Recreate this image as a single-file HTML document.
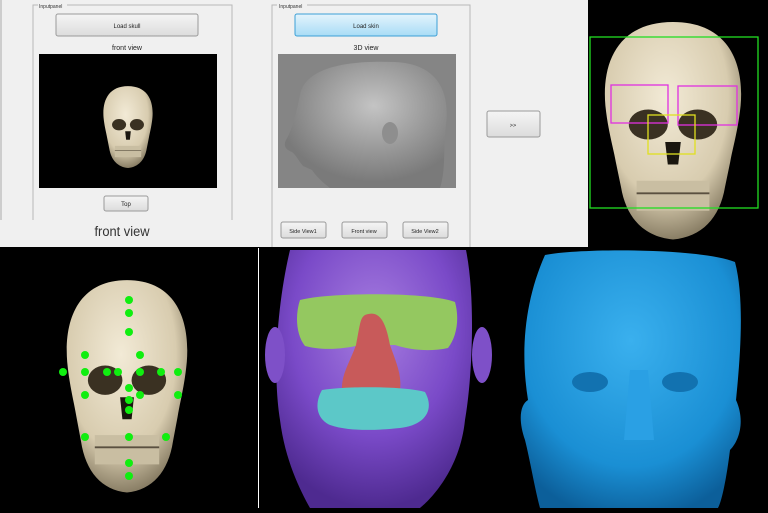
<!DOCTYPE html>
<html><head><style>
body{margin:0;width:768px;height:508px;overflow:hidden;background:#000;font-family:"Liberation Sans",sans-serif}
</style></head><body>
<svg width="768" height="508" xmlns="http://www.w3.org/2000/svg" font-family="Liberation Sans, sans-serif">
<defs>
<radialGradient id="bone" cx="45%" cy="35%" r="65%"><stop offset="0" stop-color="#f2ead6"/><stop offset="0.7" stop-color="#d8ccaf"/><stop offset="1" stop-color="#8a7f66"/></radialGradient>
<radialGradient id="purp" cx="50%" cy="30%" r="70%"><stop offset="0" stop-color="#a77ee0"/><stop offset="0.6" stop-color="#7a4ac8"/><stop offset="1" stop-color="#4e2a90"/></radialGradient>
<radialGradient id="blue" cx="50%" cy="35%" r="70%"><stop offset="0" stop-color="#3ab0ee"/><stop offset="0.7" stop-color="#1a8fd4"/><stop offset="1" stop-color="#0c5f9a"/></radialGradient>
<radialGradient id="gray" cx="55%" cy="35%" r="60%"><stop offset="0" stop-color="#c4c4c4"/><stop offset="1" stop-color="#7a7a7a"/></radialGradient>
<linearGradient id="btn" x1="0" y1="0" x2="0" y2="1"><stop offset="0" stop-color="#f5f5f5"/><stop offset="1" stop-color="#dcdcdc"/></linearGradient>
<linearGradient id="btnb" x1="0" y1="0" x2="0" y2="1"><stop offset="0" stop-color="#e4f4fc"/><stop offset="1" stop-color="#a8dcf6"/></linearGradient>
<g id="skull">
<path d="M0,-72 C42,-72 55,-40 52,-5 C50,15 46,28 44,40 L40,60 C36,85 22,100 0,102 C-22,100 -36,85 -40,60 L-44,40 C-46,28 -50,15 -52,-5 C-55,-40 -42,-72 0,-72Z" fill="url(#bone)"/>
<ellipse cx="-19" cy="10" rx="15" ry="12" fill="#3a3122"/><ellipse cx="19" cy="10" rx="15" ry="12" fill="#3a3122"/>
<path d="M-6,24 L6,24 L4,42 L-4,42Z" fill="#1a160f"/>
<rect x="-28" y="55" width="56" height="24" fill="#c9bea2"/>
<path d="M-28,65 H28" stroke="#5a5040" stroke-width="1.5"/>
</g>
</defs>
<!-- GUI -->
<rect x="0" y="0" width="588" height="247" fill="#f0f0f0"/>
<line x1="1" y1="0" x2="1" y2="220" stroke="#aaa"/>
<path d="M33,220 V5 H38 M67,5 H232 V220" fill="none" stroke="#b8b8b8"/>
<text x="39" y="8" font-size="5" fill="#333">Inputpanel</text>
<rect x="56" y="14" width="142" height="22" rx="2" fill="url(#btn)" stroke="#9a9a9a"/>
<text x="127" y="28" font-size="6" text-anchor="middle" fill="#222">Load skull</text>
<text x="127" y="50" font-size="7" text-anchor="middle" fill="#222">front view</text>
<rect x="39" y="54" width="178" height="134" fill="#000"/>
<g transform="translate(128,120) scale(0.47)"><use href="#skull"/></g>
<rect x="104" y="196" width="44" height="15" rx="2" fill="url(#btn)" stroke="#9a9a9a"/>
<text x="126" y="206" font-size="6" text-anchor="middle" fill="#222">Top</text>
<text x="122" y="236" font-size="14" text-anchor="middle" fill="#333" transform="translate(122,0) scale(0.92,1) translate(-122,0)">front view</text>
<path d="M272,247 V5 H277 M307,5 H470 V247" fill="none" stroke="#b8b8b8"/>
<text x="279" y="8" font-size="5" fill="#333">Inputpanel</text>
<rect x="295" y="14" width="142" height="22" rx="2" fill="url(#btnb)" stroke="#3c9fd6"/>
<text x="366" y="28" font-size="6" text-anchor="middle" fill="#222">Load skin</text>
<text x="366" y="50" font-size="7" text-anchor="middle" fill="#222">3D view</text>
<rect x="278" y="54" width="178" height="134" fill="#858585"/>
<path d="M300,95 C305,68 345,60 395,62 C438,64 450,92 446,125 C443,150 446,170 440,188 L330,188 C322,182 316,176 312,170 L303,166 C298,160 296,155 292,152 C286,150 283,146 286,140 C292,130 296,115 300,95Z" fill="url(#gray)"/>
<ellipse cx="390" cy="133" rx="8" ry="11" fill="#8e8e8e"/>
<rect x="281" y="222" width="45" height="16" rx="2" fill="url(#btn)" stroke="#9a9a9a"/>
<text x="303" y="233" font-size="5.5" text-anchor="middle" fill="#222">Side View1</text>
<rect x="342" y="222" width="45" height="16" rx="2" fill="url(#btn)" stroke="#9a9a9a"/>
<text x="364" y="233" font-size="5.5" text-anchor="middle" fill="#222">Front view</text>
<rect x="403" y="222" width="45" height="16" rx="2" fill="url(#btn)" stroke="#9a9a9a"/>
<text x="425" y="233" font-size="5.5" text-anchor="middle" fill="#222">Side View2</text>
<rect x="487" y="111" width="53" height="26" rx="2" fill="url(#btn)" stroke="#9a9a9a"/>
<text x="513" y="127" font-size="5.5" text-anchor="middle" fill="#222">&gt;&gt;</text>
<!-- top right skull -->
<g transform="translate(673,112) scale(1.3,1.25)"><use href="#skull"/></g>
<rect x="590" y="37" width="168" height="171" fill="none" stroke="#22dd22" stroke-width="1.3"/>
<rect x="611" y="85" width="57" height="38" fill="none" stroke="#e030e0" stroke-width="1.3"/>
<rect x="678" y="86" width="59" height="39" fill="none" stroke="#e030e0" stroke-width="1.3"/>
<rect x="648" y="115" width="47" height="39" fill="none" stroke="#e0e020" stroke-width="1.3"/>
<!-- bottom skull -->
<g transform="translate(127,368) scale(1.15,1.22)"><use href="#skull"/></g>
<g fill="#10ee10">
<circle cx="129" cy="300" r="4"/><circle cx="129" cy="313" r="4"/><circle cx="129" cy="332" r="4"/>
<circle cx="85" cy="355" r="4"/><circle cx="140" cy="355" r="4"/>
<circle cx="63" cy="372" r="4"/><circle cx="85" cy="372" r="4"/><circle cx="107" cy="372" r="4"/><circle cx="118" cy="372" r="4"/><circle cx="140" cy="372" r="4"/><circle cx="161" cy="372" r="4"/><circle cx="178" cy="372" r="4"/>
<circle cx="129" cy="388" r="4"/><circle cx="85" cy="395" r="4"/><circle cx="140" cy="395" r="4"/><circle cx="178" cy="395" r="4"/><circle cx="129" cy="400" r="4"/><circle cx="129" cy="410" r="4"/>
<circle cx="85" cy="437" r="4"/><circle cx="129" cy="437" r="4"/><circle cx="166" cy="437" r="4"/>
<circle cx="129" cy="463" r="4"/><circle cx="129" cy="476" r="4"/>
</g>
<!-- purple face -->
<rect x="258" y="248" width="1" height="260" fill="#fff"/>
<path d="M290,250 H466 C476,300 472,380 465,420 C460,470 430,500 420,508 H310 C300,490 285,460 280,420 C272,370 278,300 290,250Z" fill="url(#purp)"/>
<ellipse cx="275" cy="355" rx="10" ry="28" fill="#7e50c8"/><ellipse cx="482" cy="355" rx="10" ry="28" fill="#7e50c8"/>
<path d="M300,300 C330,292 430,292 455,302 C460,320 456,338 448,348 C430,352 410,350 395,345 L360,345 C340,350 320,350 305,346 C296,335 295,315 300,300Z" fill="#94c860"/>
<path d="M365,315 C378,310 385,318 390,345 C396,362 402,375 400,390 C380,393 360,393 342,390 C341,375 350,362 356,345 C360,325 360,318 365,315Z" fill="#c85a5a"/>
<path d="M322,390 C345,386 405,386 425,392 C435,410 425,425 400,428 C380,430 350,432 330,425 C315,418 315,402 322,390Z" fill="#5cc8c8"/>
<!-- blue face -->
<path d="M545,255 C580,248 700,248 735,262 C745,300 740,360 736,400 C745,420 740,440 730,450 C725,490 720,505 718,508 H540 C535,490 530,460 525,440 C518,420 520,405 528,400 C520,350 525,300 545,255Z" fill="url(#blue)"/>
<ellipse cx="590" cy="382" rx="18" ry="10" fill="#1272b0"/><ellipse cx="680" cy="382" rx="18" ry="10" fill="#1272b0"/>
<path d="M630,370 L648,370 L654,440 L624,440Z" fill="#2aa0e4"/>
</svg>
</body></html>
